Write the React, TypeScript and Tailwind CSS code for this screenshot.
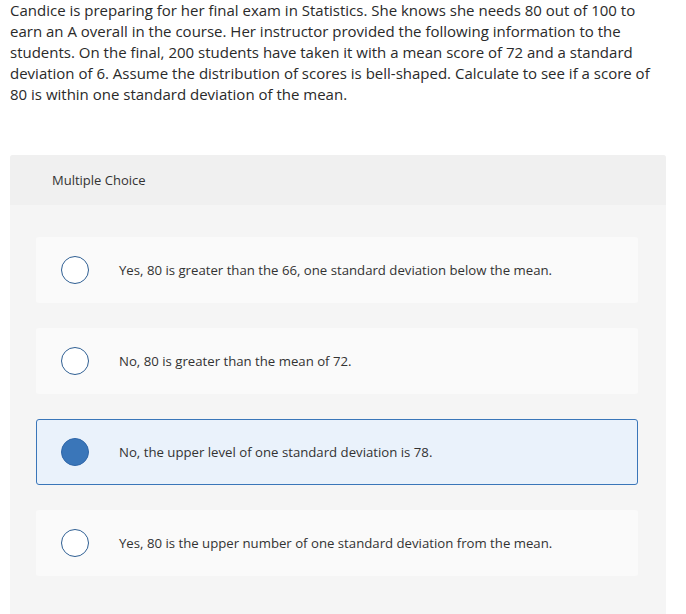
const options = [
  { text: "Yes, 80 is greater than the 66, one standard deviation below the mean.", selected: false },
  { text: "No, 80 is greater than the mean of 72.", selected: false },
  { text: "No, the upper level of one standard deviation is 78.", selected: true },
  { text: "Yes, 80 is the upper number of one standard deviation from the mean.", selected: false },
];

function Radio({ checked }: { checked: boolean }) {
  return (
    <span
      className={
        checked
          ? "w-[28px] h-[28px] rounded-full border-[1.5px] border-[#2f66a8] bg-[#3a76b9] shrink-0"
          : "w-[28px] h-[28px] rounded-full border-[1.5px] border-[#2f5f93] bg-white shrink-0"
      }
    />
  );
}

export default function App() {
  return (
    <div className="w-[686px] h-[614px] overflow-hidden bg-white font-['Open_Sans','Noto_Sans',sans-serif]">
      <p className="px-[10px] text-[15px] leading-[21px] text-[#2a2a2a] whitespace-nowrap">
        Candice is preparing for her final exam in Statistics. She knows she needs 80 out of 100 to
        <br />
        earn an A overall in the course. Her instructor provided the following information to the
        <br />
        students. On the final, 200 students have taken it with a mean score of 72 and a standard
        <br />
        deviation of 6. Assume the distribution of scores is bell-shaped. Calculate to see if a score of
        <br />
        80 is within one standard deviation of the mean.
      </p>

      <div className="mx-[10px] mt-[50px] w-[656px] bg-[#f5f5f5] rounded-t-[3px] h-[460px]">
        <div className="h-[50px] bg-[#f0f0f0] flex items-center pl-[42px] pt-[2px] text-[13px] text-[#333] rounded-t-[3px]">
          Multiple Choice
        </div>
        <div className="flex flex-col gap-[25px] pt-[32px] pl-[26px]">
          {options.map((o) => (
            <div
              key={o.text}
              className={
                o.selected
                  ? "w-[602px] h-[66px] flex items-center pl-[24px] rounded-[3px] border border-[#3a76b9] bg-[#eaf2fb]"
                  : "w-[602px] h-[66px] flex items-center pl-[25px] rounded-[3px] bg-[#fafafa]"
              }
            >
              <Radio checked={o.selected} />
              <span className="ml-[30px] pt-[2px] text-[13.2px] text-[#333]">{o.text}</span>
            </div>
          ))}
        </div>
      </div>
    </div>
  );
}
